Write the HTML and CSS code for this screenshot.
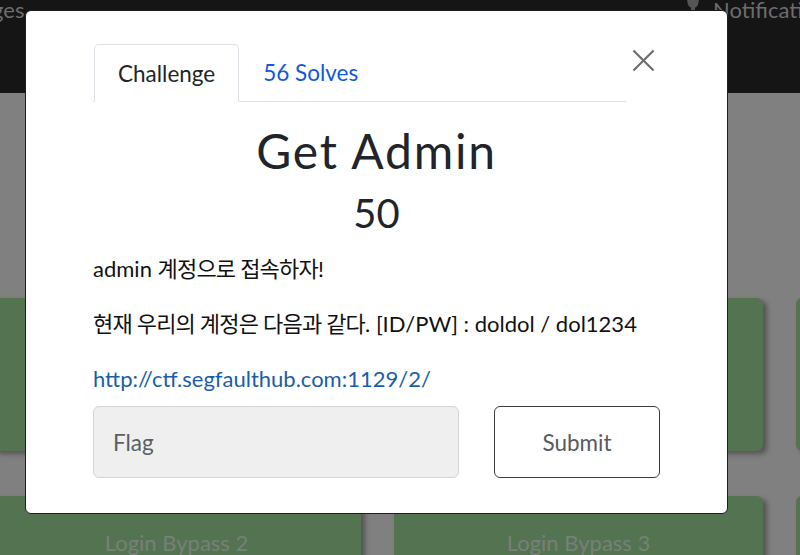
FILE: index.html
```html
<!DOCTYPE html>
<html lang="ko">
<head>
<meta charset="utf-8">
<title>Get Admin</title>
<link rel="stylesheet" href="styles.css">
</head>
<body>
<div class="page">
  <header class="navbar">
    <span class="nav-left">ges</span>
    <span class="nav-right">
      <svg class="bell" width="14" height="14" viewBox="0 0 14 14"><path d="M1 -2 C1 6 3 9 7 9 C11 9 13 6 13 -2 Z" fill="#555"/><circle cx="7" cy="10" r="2.2" fill="#555"/></svg>
      <span class="nav-text">Notifications</span>
    </span>
  </header>
  <main class="board">
    <div class="grid">
      <div class="card"></div>
      <div class="card"></div>
      <div class="card"></div>
      <div class="card"><span>Login Bypass 2</span></div>
      <div class="card"><span>Login Bypass 3</span></div>
      <div class="card"></div>
    </div>
  </main>

  <div class="modal">
    <div class="modal-head">
      <nav class="tabs">
        <span class="tab active">Challenge</span>
        <span class="tab link">56 Solves</span>
      </nav>
      <button class="close" aria-label="Close">
        <svg width="24" height="24" viewBox="0 0 24 24"><path d="M1.5 1.5 L22.5 22.5 M22.5 1.5 L1.5 22.5" stroke="#6c6c6c" stroke-width="2.2" fill="none"/></svg>
      </button>
    </div>
    <h2 class="title">Get Admin</h2>
    <h3 class="points">50</h3>
    <div class="desc">
      <p>admin <span class="ko">계정으로 접속하자</span>!</p>
      <p><span class="ko">현재 우리의 계정은 다음과 같다</span>. [ID/PW] : doldol / dol1234</p>
      <p><a href="#">http://ctf.segfaulthub.com:1129/2/</a></p>
    </div>
    <form class="submit-row">
      <input class="flag" type="text" placeholder="Flag">
      <button class="submit" type="button">Submit</button>
    </form>
  </div>
</div>
</body>
</html>
```

FILE: styles.css
```css
* { box-sizing: border-box; }
html, body { margin: 0; padding: 0; }
body {
  width: 800px;
  height: 555px;
  overflow: hidden;
  background: #808080;
  font-family: Lato, "Noto Sans CJK KR", sans-serif;
}
.page { position: relative; width: 800px; height: 555px; overflow: hidden; }

.navbar {
  height: 93px;
  background: #151516;
  display: flex;
  align-items: flex-start;
  overflow: hidden;
  color: #6d6d6e;
  font-size: 22px;
  line-height: 20px;
}
.nav-left { flex: 0 0 694px; margin-left: -8px; }
.nav-right { display: flex; align-items: flex-start; flex-shrink: 0; white-space: nowrap; }
.bell { margin-top: -1px; margin-right: 13px; }

.board { padding-top: 205px; }
.grid {
  display: grid;
  grid-template-columns: repeat(3, 369px);
  grid-auto-rows: 153px;
  column-gap: 33px;
  row-gap: 45px;
  margin-left: -8px;
}
.card {
  background: #547350;
  border-radius: 6px;
  box-shadow: 4px 3px 5px rgba(0,0,0,0.35);
  display: flex;
  justify-content: center;
  padding-top: 33px;
  color: #77807a;
  font-size: 22px;
}

.modal {
  position: absolute;
  left: 25px;
  top: 10px;
  width: 703px;
  height: 504px;
  background: #fff;
  border: 1px solid #1e1e1e;
  border-radius: 6px;
  padding: 33px 67px 0 67px;
  color: #212529;
}
.modal-head { display: flex; align-items: flex-start; }
.tabs {
  flex: 0 0 533px;
  display: flex;
  border-bottom: 1px solid #dee2e6;
  padding-left: 1px;
}
.tab {
  display: block;
  height: 58px;
  padding: 0 24px;
  font-size: 22.5px;
  line-height: 58px;
  margin-bottom: -1px;
}
.tab.active {
  color: #212529;
  border: 1px solid #dee2e6;
  border-bottom-color: #fff;
  border-radius: 5px 5px 0 0;
  padding: 0 23px;
}
.tab.link { color: #1159dc; }
.close {
  margin-left: auto;
  margin-right: 5px;
  margin-top: 5px;
  padding: 0;
  border: 0;
  background: none;
  width: 23px;
  height: 23px;
}
.close svg { display: block; width: 23px; height: 23px; }

.title {
  margin: 20px 0 0;
  text-align: center;
  font-weight: 400;
  font-size: 48px;
  line-height: 58px;
  letter-spacing: 1.8px;
}
.points {
  margin: 9px 0 0;
  text-align: center;
  font-weight: 400;
  font-size: 40px;
  line-height: 48px;
}
.desc { margin-top: 17px; font-size: 22px; line-height: 30px; color: #111; }
.desc p { margin: 0 0 25px; }
.desc .ko { letter-spacing: -0.8px; }
.desc a { color: #1b5ea8; text-decoration: none; }
.desc p:last-child { margin-bottom: 0; }

.submit-row {
  display: flex;
  gap: 35px;
  margin: 12px 0 0;
}
.flag {
  width: 366px;
  height: 72px;
  background: #efefef;
  border: 1px solid #d3d5d8;
  border-radius: 6px;
  padding: 0 19px;
  font-family: Lato, sans-serif;
  font-size: 22.5px;
  color: #5a5f63;
}
.flag::placeholder { color: #5a5f63; }
.submit {
  width: 166px;
  height: 72px;
  background: #fff;
  border: 1px solid #3c3c3c;
  border-radius: 6px;
  font-family: Lato, sans-serif;
  font-size: 22.5px;
  color: #555b60;
}
```
